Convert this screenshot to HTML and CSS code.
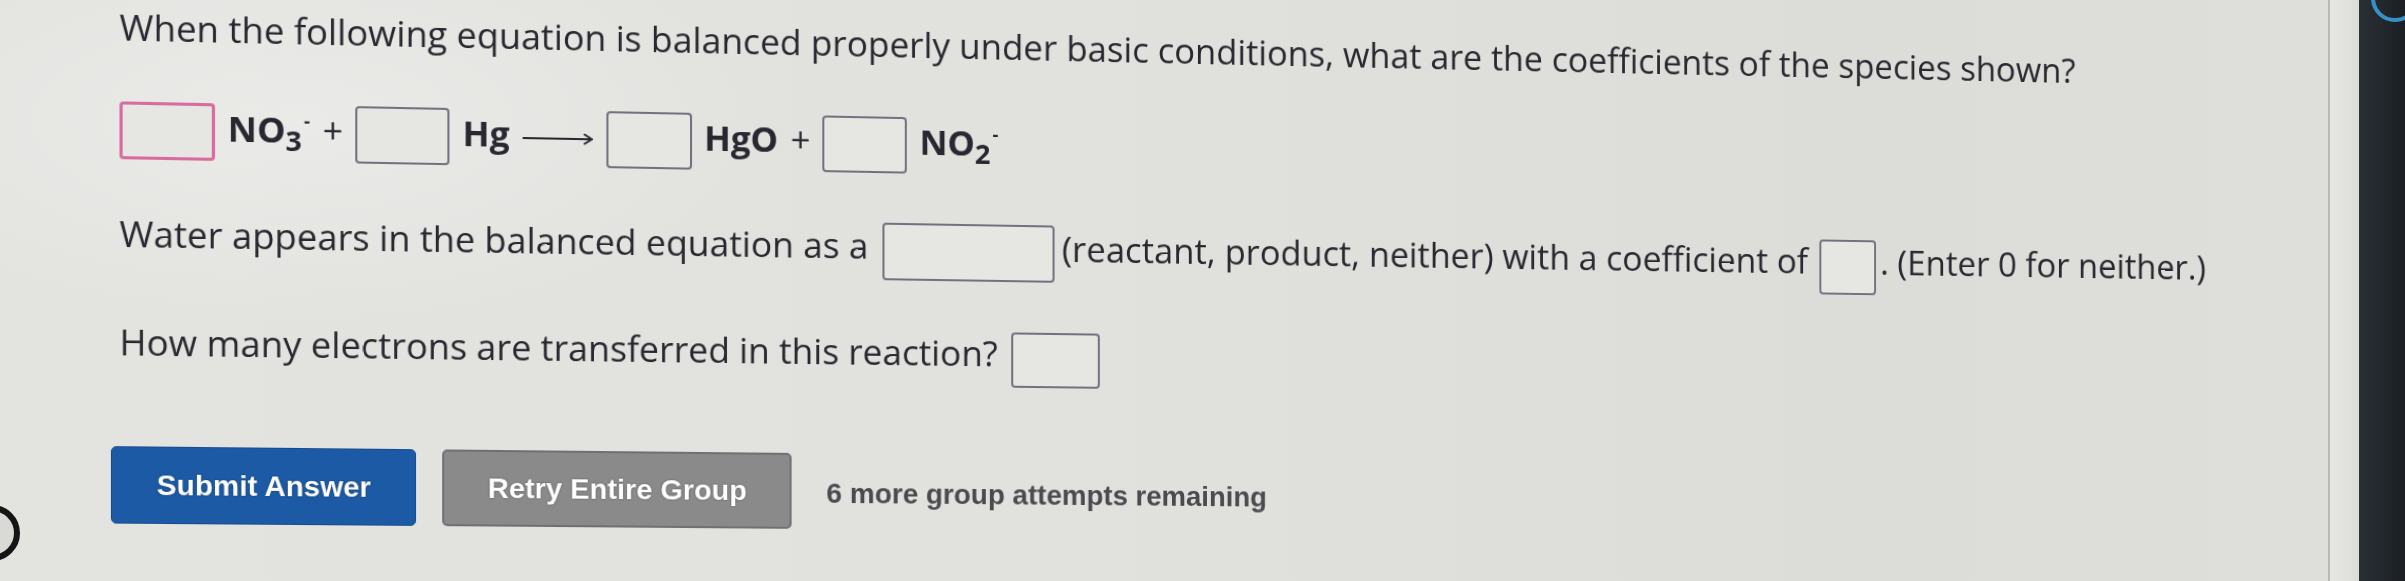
FILE: index.html
```html
<!DOCTYPE html>
<html lang="en">
<head>
<meta charset="utf-8">
<title>Balancing question</title>
<link rel="stylesheet" href="styles.css">
</head>
<body>
<div class="screen">
  <main class="panel">
    <div class="sheet">
      <p class="title">When the following equation is balanced properly under basic conditions, what are the coefficients of the species shown?</p>

      <div class="eq">
        <span class="box box-active"></span>
        <span class="species">NO<sub>3</sub><sup>-</sup></span>
        <span class="plus">+</span>
        <span class="box"></span>
        <span class="species">Hg</span>
        <svg class="arrow" width="69" height="16" viewBox="0 0 69 16" aria-hidden="true">
          <path d="M1 8 H67" />
          <path d="M60 3.5 L67 8 L60 12.5" />
        </svg>
        <span class="box box-narrow"></span>
        <span class="species">HgO</span>
        <span class="plus">+</span>
        <span class="box box-narrow"></span>
        <span class="species">NO<sub>2</sub><sup>-</sup></span>
      </div>

      <div class="q water">
        <span class="txt">Water appears in the balanced equation as a</span>
        <span class="box box-wide"></span>
        <span class="txt">(reactant, product, neither) with a coefficient of</span>
        <span class="box box-small"></span>
        <span class="txt">. (Enter 0 for neither.)</span>
      </div>

      <div class="q electrons">
        <span class="txt">How many electrons are transferred in this reaction?</span>
        <span class="box box-med"></span>
      </div>

      <div class="actions">
        <button class="btn btn-primary" type="button">Submit Answer</button>
        <button class="btn btn-secondary" type="button">Retry Entire Group</button>
        <span class="attempts">6 more group attempts remaining</span>
      </div>
    </div>

    <svg class="ring" width="22" height="60" viewBox="0 0 22 60" aria-hidden="true">
      <circle cx="-8" cy="30" r="25" />
    </svg>
  </main>
  <div class="frame"></div>
  <div class="bezel"><span class="glint"></span></div>
</div>
</body>
</html>
```

FILE: styles.css
```css
html, body {
  margin: 0;
  padding: 0;
}

body {
  width: 2405px;
  height: 581px;
  overflow: hidden;
  background: #dfe0dc;
  font-family: "Open Sans", "DejaVu Sans", sans-serif;
  color: #29272f;
}

.screen {
  display: flex;
  height: 581px;
}

.panel {
  position: relative;
  flex: 0 0 2330px;
  box-sizing: border-box;
  overflow: hidden;
  background:
    radial-gradient(ellipse 700px 300px at 300px 120px, rgba(255, 255, 255, 0.28), rgba(255, 255, 255, 0) 70%),
    linear-gradient(90deg, #e3e3e0 0%, #e1e2de 45%, #dcddd8 80%, #dedfdb 100%);
  border-right: 2px solid #b8bab6;
}

/* the photographed screen is seen slightly from the left:
   the right-hand side recedes */
.sheet {
  height: 100%;
  box-sizing: border-box;
  padding: 27px 0 0 152px;
  transform-origin: 1200px 790px;
  transform: perspective(1745px) rotateY(3deg);
}

.frame {
  flex: 0 0 29px;
  background: linear-gradient(90deg, #e6e7e3, #dcddd9);
}

.bezel {
  position: relative;
  flex: 1 1 auto;
  background: linear-gradient(90deg, #2a3036, #1b1f24);
  overflow: hidden;
}

.glint {
  position: absolute;
  right: -14px;
  top: -26px;
  width: 40px;
  height: 40px;
  border-radius: 50%;
  border: 4px solid #3a8fc8;
}

/* ---------- question text ---------- */
.title {
  margin: 0;
  font-size: 34.6px;
  line-height: 48px;
  white-space: nowrap;
}

/* ---------- answer boxes ---------- */
.box {
  flex: none;
  box-sizing: border-box;
  width: 90px;
  height: 56px;
  border: 2px solid #75707f;
  border-radius: 4px;
  background: #e6e6e3;
}

.box-active {
  border: 3px solid #d96c9e;
}

.box-narrow {
  width: 83px;
}

.box-wide {
  width: 170px;
  height: 57px;
  margin: 0 7px 0 14px;
}

.box-small {
  width: 59px;
  height: 56px;
  margin: 0 4px 0 12px;
}

.box-med {
  width: 88px;
  height: 55px;
  margin-left: 13px;
}

/* ---------- equation ---------- */
.eq {
  display: flex;
  align-items: center;
  gap: 12px;
  height: 56px;
  margin-top: 48px;
}

.species {
  font-size: 34px;
  font-weight: 700;
  line-height: 48px;
  margin-bottom: 8px;
  white-space: nowrap;
}

.species sub {
  font-size: 27px;
  line-height: 0;
  vertical-align: -8px;
}

.species sup {
  font-size: 18px;
  line-height: 0;
  vertical-align: 15px;
  margin-left: 2px;
}

.plus {
  font-size: 34px;
  font-weight: 400;
  line-height: 48px;
  margin-bottom: 8px;
}

.arrow {
  flex: none;
}

.arrow path {
  fill: none;
  stroke: #29272f;
  stroke-width: 2;
  stroke-linecap: round;
  stroke-linejoin: round;
}

/* ---------- text rows with inputs ---------- */
.q {
  display: flex;
  align-items: center;
  font-size: 34.6px;
  line-height: 48px;
  white-space: nowrap;
}

.water {
  height: 57px;
  margin-top: 49px;
}

.water .txt {
  margin-bottom: 11px;
}

.electrons {
  height: 55px;
  margin-top: 50px;
}

.electrons .txt {
  margin-bottom: 13px;
}

/* ---------- buttons ---------- */
.actions {
  display: flex;
  align-items: center;
  gap: 25px;
  margin-top: 67px;
  margin-left: -8px;
}

.btn {
  box-sizing: border-box;
  height: 75px;
  padding: 0;
  border-radius: 5px;
  font-family: "Liberation Sans", Arial, sans-serif;
  font-size: 28px;
  font-weight: 700;
  color: #ffffff;
  text-shadow: 0 0 2px rgba(0, 0, 0, 0.45);
}

.btn-primary {
  width: 289px;
  background: #1c5aa5;
  border: 1px solid #174c8e;
}

.btn-secondary {
  width: 338px;
  background: #8a8a8b;
  border: 2px solid #707072;
}

.attempts {
  margin: 5px 0 0 9px;
  font-family: "Liberation Sans", Arial, sans-serif;
  font-size: 27.5px;
  font-weight: 700;
  color: #4b4a4f;
  white-space: nowrap;
}

/* ---------- photo edge artefact ---------- */
.ring {
  position: absolute;
  left: 0;
  top: 503px;
}

.ring circle {
  fill: #d9d9d6;
  stroke: #151515;
  stroke-width: 6;
}
```
